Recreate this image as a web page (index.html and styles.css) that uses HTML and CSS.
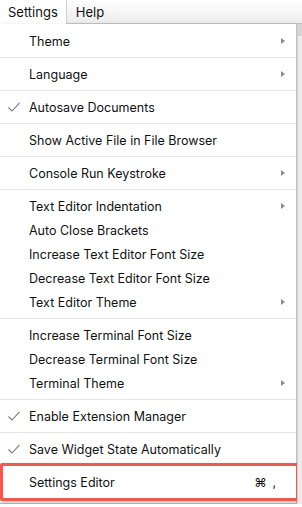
FILE: index.html
```html
<!DOCTYPE html>
<html lang="en">
<head>
    <meta charset="UTF-8">
    <meta name="viewport" content="width=device-width, initial-scale=1.0">
    <title>Settings Menu</title>
    <link rel="stylesheet" href="styles.css">
</head>
<body>
    <div class="menubar">
        <div class="tab tab-open">Settings</div>
        <div class="tab">Help</div>
        <div class="bar-fill"></div>
    </div>

    <div class="stage">
        <div class="menu">
            <div class="item"><span class="mark"></span><span class="label">Theme</span><span class="arrow"></span></div>
            <div class="sep"></div>
            <div class="item"><span class="mark"></span><span class="label">Language</span><span class="arrow"></span></div>
            <div class="sep"></div>
            <div class="item"><span class="mark"><svg width="12" height="10" viewBox="0 0 12 10"><polyline points="0.5,5.5 4,9 11.5,0.8" /></svg></span><span class="label">Autosave Documents</span></div>
            <div class="sep"></div>
            <div class="item"><span class="mark"></span><span class="label">Show Active File in File Browser</span></div>
            <div class="sep"></div>
            <div class="item"><span class="mark"></span><span class="label">Console Run Keystroke</span><span class="arrow"></span></div>
            <div class="sep"></div>
            <div class="item"><span class="mark"></span><span class="label">Text Editor Indentation</span><span class="arrow"></span></div>
            <div class="item"><span class="mark"></span><span class="label">Auto Close Brackets</span></div>
            <div class="item"><span class="mark"></span><span class="label">Increase Text Editor Font Size</span></div>
            <div class="item"><span class="mark"></span><span class="label">Decrease Text Editor Font Size</span></div>
            <div class="item"><span class="mark"></span><span class="label">Text Editor Theme</span><span class="arrow"></span></div>
            <div class="sep"></div>
            <div class="item"><span class="mark"></span><span class="label">Increase Terminal Font Size</span></div>
            <div class="item"><span class="mark"></span><span class="label">Decrease Terminal Font Size</span></div>
            <div class="item"><span class="mark"></span><span class="label">Terminal Theme</span><span class="arrow"></span></div>
            <div class="sep"></div>
            <div class="item"><span class="mark"><svg width="12" height="10" viewBox="0 0 12 10"><polyline points="0.5,5.5 4,9 11.5,0.8" /></svg></span><span class="label">Enable Extension Manager</span></div>
            <div class="sep"></div>
            <div class="item"><span class="mark"><svg width="12" height="10" viewBox="0 0 12 10"><polyline points="0.5,5.5 4,9 11.5,0.8" /></svg></span><span class="label">Save Widget State Automatically</span></div>
            <div class="item item-marked"><span class="mark"></span><span class="label">Settings Editor</span><span class="shortcut">⌘ ,</span></div>
        </div>
        <div class="backdrop"></div>
    </div>
</body>
</html>
```

FILE: styles.css
```css
:root {
    --text-dark: #111111;
    --border-color: #c2c2c2;
    --sep-color: #e6e6e6;
    --arrow-color: #8c8c8c;
    --mark-red: #ef5a50;
}

body {
    margin: 0;
    font-family: 'Inter', 'Liberation Sans', sans-serif;
    font-size: 12.5px;
    color: var(--text-dark);
    background: #ffffff;
    width: 302px;
    overflow: hidden;
}

/* top menu bar */
.menubar {
    display: flex;
    height: 24px;
    font-size: 13px;
}

.tab {
    display: flex;
    align-items: center;
    padding: 0 10px 0 9px;
    background: linear-gradient(#ffffff, #ececec);
    border-bottom: 1px solid var(--border-color);
    border-left: 1px solid #d0d0d0;
}

.tab-open {
    background: #ffffff;
    border-bottom-color: #ffffff;
    border-left: none;
    padding: 0 8px 0 8px;
}

.bar-fill {
    flex: 1;
    background: linear-gradient(#ffffff, #ededed);
    border-bottom: 1px solid var(--border-color);
}

/* dropdown */
.stage {
    display: flex;
}

.menu {
    width: 296px;
    padding: 5px 0 2px;
    border-right: 1px solid var(--border-color);
    border-bottom: 1px solid var(--border-color);
    box-shadow: 0 2px 6px rgba(0, 0, 0, 0.15);
    background: #ffffff;
}

.item {
    display: flex;
    align-items: center;
    height: 24px;
    padding-right: 11px;
}

.mark {
    width: 29px;
    flex-shrink: 0;
    display: flex;
    align-items: center;
    padding-left: 8px;
    box-sizing: border-box;
}

.mark svg polyline {
    fill: none;
    stroke: #7a7a7a;
    stroke-width: 1.1;
}

.label {
    flex: 1;
    white-space: nowrap;
}

.arrow {
    width: 0;
    height: 0;
    border-top: 3.5px solid transparent;
    border-bottom: 3.5px solid transparent;
    border-left: 4px solid var(--arrow-color);
}

.sep {
    height: 1px;
    background: var(--sep-color);
    margin: 4px 0;
}

/* highlighted entry */
.item-marked {
    height: 32px;
    margin: 2px -3px 0 0;
    border: 3px solid var(--mark-red);
    border-radius: 2px;
    box-shadow: 0 2px 4px rgba(0, 0, 0, 0.25);
    padding-right: 19px;
}

.item-marked .mark {
    width: 26px;
}

.shortcut {
    font-size: 12.5px;
    letter-spacing: 1px;
}

.backdrop {
    flex: 1;
    background: linear-gradient(#d6d6d6 0, #d6d6d6 12px, #ececec 12px);
    border-left: 1px solid #cfcfcf;
}
```
